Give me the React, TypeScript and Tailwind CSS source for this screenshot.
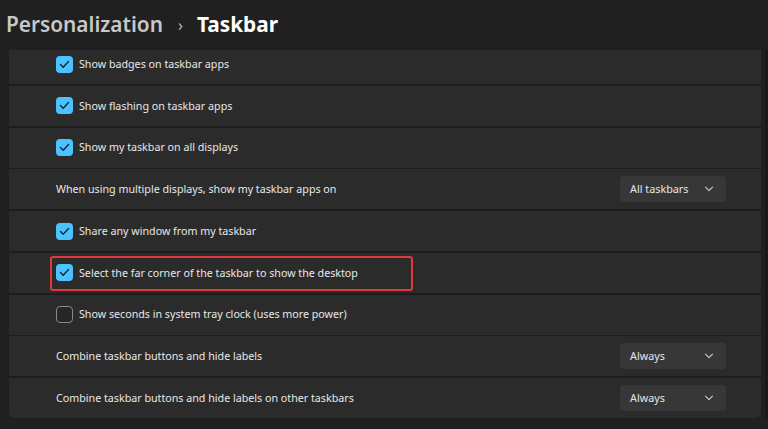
import React from "react";

type Row =
  | { kind: "check"; label: string; checked: boolean; highlight?: boolean }
  | { kind: "select"; label: string; value: string };

const rows: Row[] = [
  { kind: "check", label: "Show badges on taskbar apps", checked: true },
  { kind: "check", label: "Show flashing on taskbar apps", checked: true },
  { kind: "check", label: "Show my taskbar on all displays", checked: true },
  { kind: "select", label: "When using multiple displays, show my taskbar apps on", value: "All taskbars" },
  { kind: "check", label: "Share any window from my taskbar", checked: true },
  { kind: "check", label: "Select the far corner of the taskbar to show the desktop", checked: true, highlight: true },
  { kind: "check", label: "Show seconds in system tray clock (uses more power)", checked: false },
  { kind: "select", label: "Combine taskbar buttons and hide labels", value: "Always" },
  { kind: "select", label: "Combine taskbar buttons and hide labels on other taskbars", value: "Always" },
];

function Checkbox({ checked }: { checked: boolean }) {
  if (!checked) {
    return <div className="w-[17px] h-[17px] rounded-[4px] border border-[#8a8a8a] bg-[#262626] shrink-0" />;
  }
  return (
    <div className="w-[17px] h-[17px] rounded-[4px] bg-[#4cc2ff] flex items-center justify-center shrink-0">
      <svg width="11" height="9" viewBox="0 0 11 9" fill="none">
        <path d="M1.5 4.6 L4.2 7.2 L9.5 1.6" stroke="#0b2a3a" strokeWidth="1.4" strokeLinecap="round" strokeLinejoin="round" />
      </svg>
    </div>
  );
}

function Select({ value }: { value: string }) {
  return (
    <div className="w-[106px] h-[26px] rounded-[4px] bg-[#373737] flex items-center justify-between pl-[10px] pr-[12px] text-[10.8px] text-[#e6e6e6]">
      <span>{value}</span>
      <svg width="10" height="6" viewBox="0 0 10 6" fill="none">
        <path d="M1.5 1.2 L5 4.6 L8.5 1.2" stroke="#cfcfcf" strokeWidth="1.1" strokeLinecap="round" strokeLinejoin="round" />
      </svg>
    </div>
  );
}

export default function App() {
  return (
    <div
      className="w-[768px] h-[429px] bg-[#202020] overflow-hidden flex flex-col"
      style={{ fontFamily: '"Noto Sans", "Open Sans", sans-serif' }}
    >
      {/* breadcrumb header */}
      <div className="h-[50px] flex items-center pl-[6px] pb-[1px] shrink-0">
        <span className="text-[20.8px] font-semibold text-[#c8c8c8]">Personalization</span>
        <span className="ml-[15px] mr-[14px] text-[#bdbdbd] text-[16px]">›</span>
        <span className="text-[20.8px] font-bold text-white">Taskbar</span>
      </div>

      <div className="flex flex-1 min-h-0">
        <div className="ml-[9px] w-[752px] h-[368px] flex flex-col gap-[1.75px] rounded-b-[5px] overflow-hidden bg-[#1d1d1d]">
          {rows.map((r, i) => (
            <div
              key={i}
              className={`relative bg-[#2b2b2b] flex items-center pl-[47px] pr-[35px] shrink-0 ${
                i === 0 ? "h-[34px] pb-[6px]" : "h-[40px]"
              }`}
            >
              {r.kind === "check" ? (
                <div className="flex items-center gap-[6px] text-[10.7px] text-[#e8e8e8]">
                  <Checkbox checked={r.checked} />
                  <span>{r.label}</span>
                </div>
              ) : (
                <>
                  <span className="text-[10.7px] text-[#e8e8e8]">{r.label}</span>
                  <div className="ml-auto">
                    <Select value={r.value} />
                  </div>
                </>
              )}
              {r.kind === "check" && r.highlight && (
                <div className="absolute left-[41px] top-[3px] w-[363px] h-[35px] border-2 border-[#e0393e] rounded-[3px] pointer-events-none" />
              )}
            </div>
          ))}
        </div>
        <div className="ml-auto w-[3px] bg-[#1a1a1a] h-[368px]" />
      </div>
    </div>
  );
}
